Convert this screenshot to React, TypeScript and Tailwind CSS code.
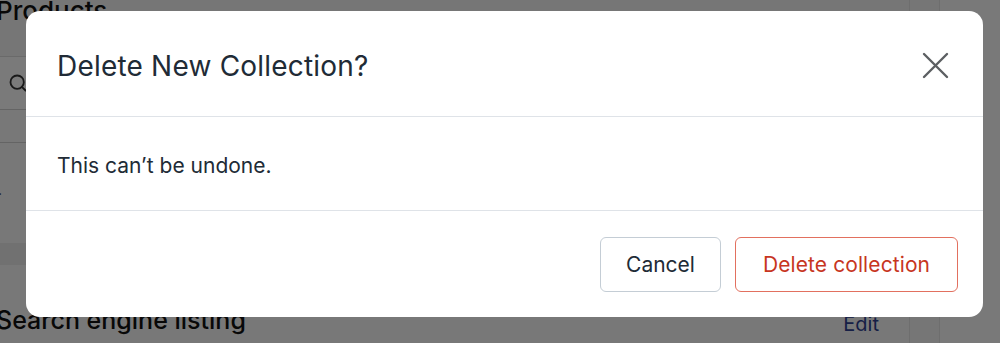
import * as React from "react"
import { Search } from "lucide-react"

const font = { fontFamily: "Inter, 'Noto Sans', sans-serif" }

function CloseIcon() {
  return (
    <svg width="27" height="27" viewBox="0 0 27 27" fill="none" stroke="currentColor" strokeWidth="2.4" strokeLinecap="round">
      <path d="M2 2L25 25M25 2L2 25" />
    </svg>
  )
}

function PageBehind() {
  return (
    <div className="flex h-[343px] w-[1000px] overflow-hidden bg-[#ececec]">
      {/* main column */}
      <div className="flex w-[913px] -ml-[4px] flex-col">
        <div className="h-[57px] border-b border-[#d4d4d4]">
          <h1 className="-mt-[9px] text-[26px] font-medium text-[#111]">Products</h1>
        </div>
        <div className="flex h-[53px] items-center gap-2 border-b border-[#c8c8c8] bg-[#f4f4f4] pl-[12px]">
          <Search className="h-[20px] w-[20px] text-[#333]" strokeWidth={2.2} />
        </div>
        <div className="h-[33px] border-b border-[#c8c8c8] bg-[#f0f0f0]" />
        <div className="flex h-[100px] items-center bg-[#f0f0f0] pl-[2px] text-[#333]">
          <span className="text-[14px]">·</span>
        </div>
        <div className="h-[22px] bg-[#e2e2e2]" />
        <div className="flex flex-1 items-end justify-between bg-[#f0f0f0] pb-[4px] pr-[30px]">
          <span className="text-[25px] font-medium text-[#111]">Search engine listing</span>
          <span className="text-[20px] text-[#2c3e8c]">Edit</span>
        </div>
      </div>
      <div className="w-[30px] border-l border-[#dcdcdc] bg-[#ececec]" />
      <div className="flex-1 border-l border-[#dcdcdc] bg-[#f2f2f2]" />
    </div>
  )
}

export default function App() {
  return (
    <div className="relative h-[343px] w-[1000px] overflow-hidden" style={font}>
      <PageBehind />
      <div className="absolute inset-0 bg-black/50" />

      {/* Modal */}
      <div className="absolute left-[26px] top-[11px] flex h-[306px] w-[957px] flex-col rounded-[14px] bg-white">
        <div className="flex h-[106px] items-center justify-between border-b border-[#dfe3e8] pl-[31px] pr-[34px] pt-[4px]">
          <h2 className="text-[28px] font-normal tracking-[0.2px] text-[#212b36]">Delete New Collection?</h2>
          <button className="text-[#5c5f62]">
            <CloseIcon />
          </button>
        </div>
        <div className="flex h-[94px] items-center border-b border-[#dfe3e8] px-[31px] pt-[4px]">
          <p className="text-[21px] text-[#212b36]">This can’t be undone.</p>
        </div>
        <div className="flex flex-1 items-center justify-end gap-[14px] pr-[25px]">
          <button className="h-[55px] w-[121px] rounded-[6px] border border-[#c4cdd5] bg-white pt-[2px] text-[21px] text-[#212b36]">
            Cancel
          </button>
          <button className="h-[55px] w-[223px] rounded-[6px] border border-[#e2705f] bg-white pt-[2px] text-[21px] tracking-[0.1px] text-[#c7361f]">
            Delete collection
          </button>
        </div>
      </div>
    </div>
  )
}
